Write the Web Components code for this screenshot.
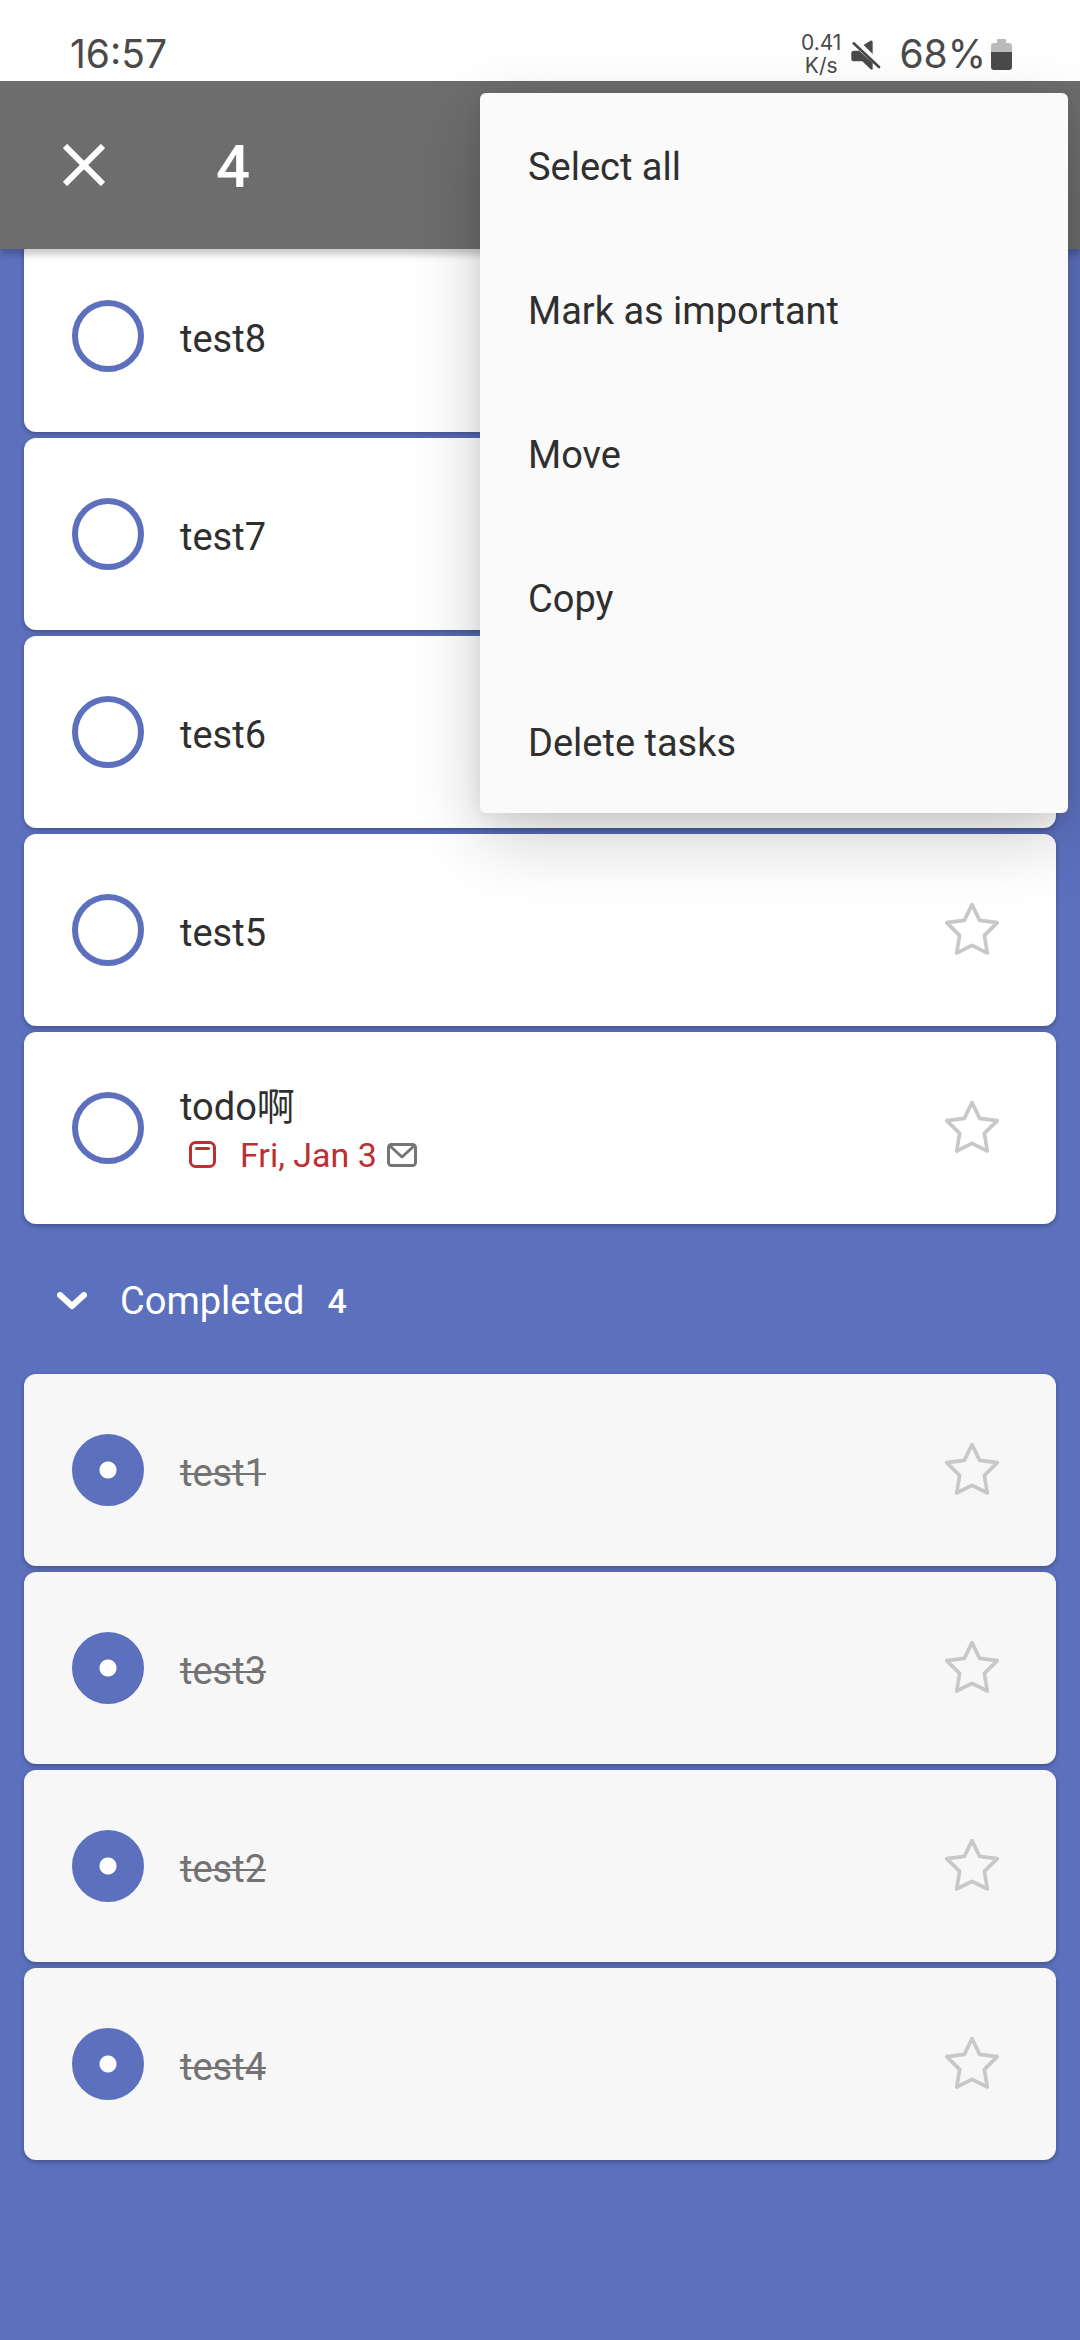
<!DOCTYPE html>
<html lang="en">
<head>
<meta charset="utf-8">
<meta name="viewport" content="width=device-width, initial-scale=1">
<title>Tasks</title>
<style>
  html, body { margin: 0; min-height: 100%; }
  body {
    --accent: #5c70be;
    --ink: #2f2f2f;
    --muted: #737373;
    --danger: #bc2f32;
    background: var(--accent);
    color: var(--ink);
    font: 400 38px/48px Roboto, "Noto Sans CJK SC", sans-serif;
  }
</style>
</head>
<body>
<todo-app>
  <status-bar slot="status" time="16:57" speed="0.41" unit="K/s" battery="68%"></status-bar>
  <selection-bar slot="bar" count="4"></selection-bar>
  <overflow-menu slot="menu">
    <menu-entry>Select all</menu-entry>
    <menu-entry>Mark as important</menu-entry>
    <menu-entry>Move</menu-entry>
    <menu-entry>Copy</menu-entry>
    <menu-entry>Delete tasks</menu-entry>
  </overflow-menu>
  <task-card>test8</task-card>
  <task-card>test7</task-card>
  <task-card>test6</task-card>
  <task-card>test5</task-card>
  <task-card>todo啊<due-line slot="details">Fri, Jan 3</due-line></task-card>
  <section-header count="4">Completed</section-header>
  <task-card done>test1</task-card>
  <task-card done>test3</task-card>
  <task-card done>test2</task-card>
  <task-card done>test4</task-card>
</todo-app>

<script>
const define = (name, render) => customElements.define(name, class extends HTMLElement {
  constructor() {
    super();
    this.attachShadow({ mode: 'open' }).innerHTML = render(this);
  }
});

define('todo-app', () => `
  <style>
    :host { display: block; position: relative; }
    main { display: flex; flex-direction: column; gap: 6px; padding: 0 24px 48px; margin-top: -9px; }
    ::slotted([slot="bar"]) { position: relative; z-index: 1; }
    ::slotted([slot="menu"]) { position: absolute; z-index: 2; top: 93px; right: 12px; }
  </style>
  <slot name="status"></slot>
  <slot name="bar"></slot>
  <main><slot></slot></main>
  <slot name="menu"></slot>`);

define('status-bar', el => `
  <style>
    :host { display: flex; align-items: flex-end; justify-content: space-between; box-sizing: border-box;
      height: 81px; padding: 0 68px 3px 70px; background: #fff; color: #4a4a4a; font: 400 39px/48px Inter, sans-serif; }
    .right { display: flex; align-items: center; }
    .net { display: flex; flex-direction: column; align-items: center; font-size: 21px; line-height: 23px; }
    .mute { margin: 0 18px 0 10px; }
    .cell { margin-left: 5px; }
    svg { display: block; }
  </style>
  <span>${el.getAttribute('time')}</span>
  <div class="right">
    <span class="net"><span>${el.getAttribute('speed')}</span><span>${el.getAttribute('unit')}</span></span>
    <svg class="mute" width="30" height="31" viewBox="0 0 90 93" aria-hidden="true">
      <path fill="#4a4a4a" d="M38 18 58 5q7-3 7 5v35ZM10 35h14l41 36v19q-1 4-7 0L34 67H10Q1 67 1 59V42q0-7 9-7Z"/>
      <path stroke="#4a4a4a" stroke-width="8" stroke-linecap="round" d="m8 13 76 71"/>
    </svg>
    <span>${el.getAttribute('battery')}</span>
    <svg class="cell" width="21" height="31" viewBox="0 0 21 31" aria-hidden="true">
      <path fill="#bbb" d="M7 0h7q1 0 1 1v3h3q3 0 3 3v6H0V7q0-3 3-3h3V1q0-1 1-1Z"/>
      <path fill="#4a4a4a" d="M0 13h21v15q0 3-3 3H3q-3 0-3-3Z"/>
    </svg>
  </div>`);

define('selection-bar', el => `
  <style>
    :host { display: flex; align-items: center; box-sizing: border-box; height: 168px; padding: 0 36px; gap: 84px;
      background: #6d6d6d; color: #fff; box-shadow: 0 6px 6px rgba(0,0,0,.2); }
    button { display: grid; place-items: center; width: 96px; height: 96px; padding: 0; border: 0; background: none; color: inherit; }
    h1 { margin: 0; padding-top: 4px; font-size: 60px; line-height: 72px; font-weight: 500; }
  </style>
  <button type="button" aria-label="Clear selection">
    <svg width="42" height="42" viewBox="0 0 42 42"><path fill="none" stroke="currentColor" stroke-width="6" d="m2 2 38 38M40 2 2 40"/></svg>
  </button>
  <h1>${el.getAttribute('count')}</h1>`);

define('overflow-menu', () => `
  <style>
    :host { display: flex; flex-direction: column; width: 588px; max-width: calc(100% - 24px); border-radius: 6px; background: #fafafa;
      box-shadow: 0 3px 20px rgba(0,0,0,.08), 0 24px 72px rgba(0,0,0,.2); }
  </style>
  <slot></slot>`);

define('menu-entry', () => `
  <style>
    :host { display: block; }
    button { width: 100%; height: 144px; padding: 4px 48px 0; border: 0; background: none; color: inherit; font: inherit; text-align: left; }
  </style>
  <button type="button"><slot></slot></button>`);

define('task-card', el => {
  const done = el.hasAttribute('done');
  return `
  <style>
    :host { display: flex; align-items: center; box-sizing: border-box; min-height: 192px; padding: 0 48px; gap: 36px;
      border-radius: 12px; background: #fff; box-shadow: 0 2px 5px rgba(0,0,0,.28); }
    :host([done]) { background: #f7f7f7; color: var(--muted); }
    :host([done]) label { text-decoration: line-through 2px; }
    input { appearance: none; flex: none; width: 72px; height: 72px; margin: 0; border: 6px solid var(--accent); border-radius: 50%; }
    input:checked { background: radial-gradient(circle, #fff 8px, var(--accent) 9px); }
    .text { flex: 1; display: flex; flex-direction: column; align-items: flex-start; padding-top: 5px; }
    .star { flex: none; width: 72px; height: 72px; padding: 0; border: 0; background: none; color: #c8c8c8; }
    svg { display: block; }
  </style>
  <input type="checkbox" id="check" ${done ? 'checked' : ''}>
  <div class="text">
    <label for="check"><slot></slot></label>
    <slot name="details"></slot>
  </div>
  <button class="star" type="button" aria-label="Mark as important" aria-pressed="false">
    <svg width="72" height="72" viewBox="0 0 216 216">
      <path fill="none" stroke="currentColor" stroke-width="11" stroke-linejoin="round"
        d="m108 32 23 47 53 7-39 38 9 53-46-23-46 23 9-53-39-38 53-7Z"/>
    </svg>
  </button>`;
});

define('due-line', () => `
  <style>
    :host { display: flex; align-items: center; color: var(--danger); font-size: 34px; line-height: 48px; padding-left: 9px; }
    .cal { margin-right: 24px; }
    .mail { margin-left: 10px; color: #757575; }
    svg { fill: none; stroke: currentColor; stroke-width: 3; stroke-linejoin: round; stroke-linecap: round; }
  </style>
  <svg class="cal" width="27" height="27" viewBox="0 0 27 27" aria-hidden="true"><rect x="1.5" y="1.5" width="24" height="24" rx="5"/><path d="M7.500 7.500h12"/></svg>
  <slot></slot>
  <svg class="mail" width="30" height="24" viewBox="0 0 30 24" aria-hidden="true"><rect x="1.500" y="1.500" width="27" height="21" rx="3"/><path d="m3 3 12 11L27 3"/></svg>`);

define('section-header', el => `
  <style>
    :host { display: block; color: #fff; }
    button { display: flex; align-items: center; width: 100%; height: 138px; padding: 4px 33px 0; border: 0; background: none; color: inherit; font: inherit; }
    svg { margin-right: 33px; }
    .count { margin-left: 23px; font-size: 34px; font-weight: 500; }
  </style>
  <button type="button" aria-expanded="true">
    <svg width="30" height="18" viewBox="0 0 30 18" aria-hidden="true"><path fill="none" stroke="currentColor" stroke-width="6" stroke-linecap="round" stroke-linejoin="round" d="m3 3 12 11L27 3"/></svg>
    <slot></slot>
    <span class="count">${el.getAttribute('count')}</span>
  </button>`);
</script>
</body>
</html>
